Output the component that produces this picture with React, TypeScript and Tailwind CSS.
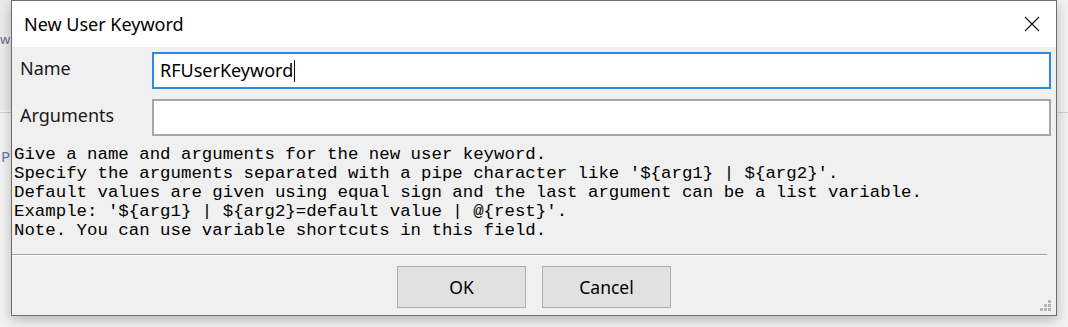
import React from "react";

const help = [
  "Give a name and arguments for the new user keyword.",
  "Specify the arguments separated with a pipe character like '${arg1} | ${arg2}'.",
  "Default values are given using equal sign and the last argument can be a list variable.",
  "Example: '${arg1} | ${arg2}=default value | @{rest}'.",
  "Note. You can use variable shortcuts in this field.",
];

const ui = { fontFamily: '"Noto Sans", "Open Sans", sans-serif' };
const mono = { fontFamily: '"Liberation Mono", "DejaVu Sans Mono", monospace' };

const Grip = () => (
  <svg width="12" height="12" viewBox="0 0 12 12" className="absolute right-[4px] bottom-[3px]">
    {[
      [8, 0],
      [8, 4],
      [4, 4],
      [8, 8],
      [4, 8],
      [0, 8],
    ].map(([x, y], i) => (
      <rect key={i} x={x} y={y} width="3" height="3" fill="#b4b4b4" />
    ))}
  </svg>
);

export default function App() {
  return (
    <div className="relative w-[1068px] h-[327px] bg-[#f3f3f3] overflow-hidden" style={ui}>
      {/* bits of the window behind */}
      <div className="absolute left-0 top-0 w-[12px] h-[110px] bg-[#ebebeb]" />
      <div className="absolute left-0 top-[112px] w-[12px] h-[1px] bg-[#d0d0d0]" />
      <div className="absolute left-[1057px] top-[112px] w-[11px] h-[1px] bg-[#d0d0d0]" />
      <div className="absolute left-0 top-[30px] text-[13px] text-[#6b7280]">w</div>
      <div className="absolute left-[1px] top-[145px] text-[15px] text-[#5b7fa8]">P</div>

      <div className="relative ml-[11px] w-[1046px] h-[316px] flex flex-col bg-[#f0f0f0] border border-[#6e6e6e] shadow-[0_4px_12px_rgba(0,0,0,0.25)]">
        <div className="h-[46px] shrink-0 bg-white flex items-center justify-between pl-[12px] pr-[16px]">
          <span className="text-[18px] text-black">New User Keyword</span>
          <svg width="16" height="16" viewBox="0 0 16 16">
            <path d="M1 1 L15 15 M15 1 L1 15" stroke="#111" strokeWidth="1.1" fill="none" />
          </svg>
        </div>

        <div className="flex flex-col gap-[10px] pt-[5px] pl-[8px] pr-[5px]">
          <div className="flex items-center">
            <span className="w-[132px] pb-[5px] text-[18px] text-[#1a1a1a]">Name</span>
            <div className="flex-1 h-[37px] bg-white border-2 border-[#2b8ae6] flex items-center pl-[6px] text-[18px] text-black">
              RFUserKeyword
              <span className="inline-block w-[1px] h-[22px] bg-black ml-[1px]" />
            </div>
          </div>
          <div className="flex items-center">
            <span className="w-[132px] pb-[5px] text-[18px] text-[#1a1a1a]">Arguments</span>
            <div className="flex-1 h-[37px] bg-white border-2 border-[#a7a7a7]" />
          </div>
        </div>

        <div className="pl-[2px] pt-[9px] text-[17.4px] leading-[19px] text-black" style={mono}>
          {help.map((l) => (
            <div key={l} className="whitespace-pre">
              {l}
            </div>
          ))}
        </div>

        <div className="mt-[14px] mr-[9px] h-[2px] border-t border-[#a0a0a0] border-b border-b-white" />

        <div className="flex justify-center gap-[16px] pt-[10px]">
          <button className="w-[129px] h-[42px] bg-[#e1e1e1] border border-[#adadad] text-[17.5px] text-black">
            OK
          </button>
          <button className="w-[129px] h-[42px] bg-[#e1e1e1] border border-[#adadad] text-[17.5px] text-black">
            Cancel
          </button>
        </div>
        <Grip />
      </div>
    </div>
  );
}
